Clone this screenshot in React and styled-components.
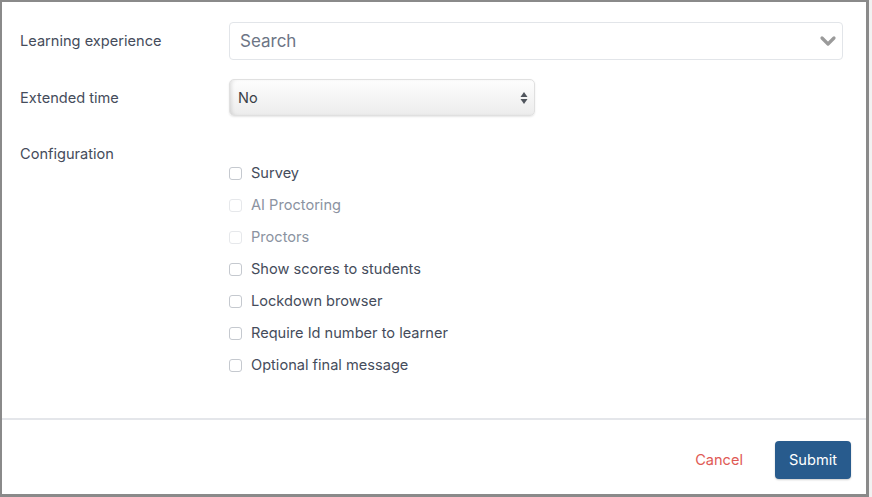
import React from 'react';
import styled, { createGlobalStyle } from 'styled-components';
import { ChevronDown } from 'lucide-react';

const GlobalStyle = createGlobalStyle`
  html, body {
    margin: 0;
    padding: 0;
    background: #f2f2f2;
  }
  body {
    font-family: Inter, "Noto Sans", "Liberation Sans", sans-serif;
    color: #3e4555;
    -webkit-font-smoothing: antialiased;
  }
`;

const Frame = styled.div`
  box-sizing: border-box;
  width: 869px;
  height: 497px;
  background: #fff;
  border-style: solid;
  border-color: #8a8a8a;
  border-width: 2px 3px 3px 2px;
  display: flex;
  flex-direction: column;
`;

const Body = styled.div`
  flex: 1;
  padding: 20px 23px 0 18px;
  display: flex;
  flex-direction: column;
  gap: 19px;
`;

const Row = styled.div`
  display: grid;
  grid-template-columns: 209px 1fr;
  align-items: ${(p) => (p.$top ? 'start' : 'center')};
  margin-top: ${(p) => p.$offset || 0}px;
`;

const Label = styled.div`
  font-size: 14.6px;
  line-height: 20px;
  color: #454c5b;
`;

const Field = styled.div`
  position: relative;
  width: ${(p) => p.$width || '100%'};
`;

const SearchInput = styled.input`
  box-sizing: border-box;
  width: 100%;
  height: 38px;
  border: 1px solid #e2e5e9;
  border-radius: 4px;
  padding: 0 40px 0 10px;
  font-family: inherit;
  font-size: 17px;
  color: #3e4555;
  outline: none;
  &::placeholder {
    color: #6c7585;
  }
`;

const Chevron = styled(ChevronDown)`
  position: absolute;
  right: 3px;
  top: 50%;
  transform: translateY(-50%);
  color: #9a9a9a;
  pointer-events: none;
`;

const NativeSelect = styled.select`
  box-sizing: border-box;
  appearance: none;
  -webkit-appearance: none;
  width: 100%;
  height: 37px;
  border: 1px solid #e0e0e0;
  border-radius: 5px;
  padding: 0 24px 0 8px;
  font-family: inherit;
  font-size: 14.5px;
  color: #3a3f47;
  background: linear-gradient(180deg, #fefefe 0%, #f5f5f5 50%, #ececec 100%);
  box-shadow: inset 3px 0 4px -2px rgba(0, 0, 0, 0.14), 0 1px 2px rgba(0, 0, 0, 0.1);
  outline: none;
`;

const Arrows = styled.svg`
  position: absolute;
  right: 7px;
  top: 50%;
  transform: translateY(-50%);
  pointer-events: none;
`;

const CheckList = styled.div`
  display: flex;
  flex-direction: column;
  padding-top: 13px;
`;

const CheckRow = styled.label`
  display: flex;
  align-items: center;
  gap: 9px;
  height: 32px;
  font-size: 14.6px;
  color: ${(p) => (p.$disabled ? '#8b93a1' : '#454c5b')};
`;

const Box = styled.span`
  box-sizing: border-box;
  width: 13px;
  height: 13px;
  border: 1px solid ${(p) => (p.$disabled ? '#e6e8eb' : '#c5c9cf')};
  border-radius: 3px;
  background: #fff;
  flex-shrink: 0;
`;

const Footer = styled.div`
  border-top: 2px solid #e4e6ea;
  height: 76px;
  box-sizing: border-box;
  display: flex;
  align-items: center;
  justify-content: flex-end;
  gap: 32px;
  padding: 6px 15px 0 0;
`;

const CancelButton = styled.button`
  border: none;
  background: none;
  font-family: inherit;
  font-size: 14.6px;
  color: #e05a55;
  padding: 0;
  cursor: pointer;
`;

const SubmitButton = styled.button`
  width: 76px;
  height: 38px;
  border: none;
  border-radius: 4px;
  background: #285b8d;
  color: #fff;
  font-family: inherit;
  font-size: 14.6px;
  box-shadow: 0 1px 2px rgba(0, 0, 0, 0.2);
  cursor: pointer;
`;

const options = [
  { label: 'Survey' },
  { label: 'AI Proctoring', disabled: true },
  { label: 'Proctors', disabled: true },
  { label: 'Show scores to students' },
  { label: 'Lockdown browser' },
  { label: 'Require Id number to learner' },
  { label: 'Optional final message' },
];

export default function App() {
  return (
    <>
      <GlobalStyle />
      <Frame>
        <Body>
          <Row>
            <Label>Learning experience</Label>
            <Field>
              <SearchInput placeholder="Search" />
              <Chevron size={24} strokeWidth={3.2} />
            </Field>
          </Row>
          <Row>
            <Label>Extended time</Label>
            <Field $width="306px">
              <NativeSelect defaultValue="no">
                <option value="no">No</option>
                <option value="yes">Yes</option>
              </NativeSelect>
              <Arrows width="8" height="13" viewBox="0 0 8 13">
                <path d="M4 0.5 L7.5 5.5 H0.5 Z" fill="#50555d" />
                <path d="M4 12.5 L7.5 7.5 H0.5 Z" fill="#50555d" />
              </Arrows>
            </Field>
          </Row>
          <Row $top $offset={9}>
            <Label>Configuration</Label>
            <CheckList>
              {options.map((o) => (
                <CheckRow key={o.label} $disabled={o.disabled}>
                  <Box $disabled={o.disabled} />
                  {o.label}
                </CheckRow>
              ))}
            </CheckList>
          </Row>
        </Body>
        <Footer>
          <CancelButton>Cancel</CancelButton>
          <SubmitButton>Submit</SubmitButton>
        </Footer>
      </Frame>
    </>
  );
}
